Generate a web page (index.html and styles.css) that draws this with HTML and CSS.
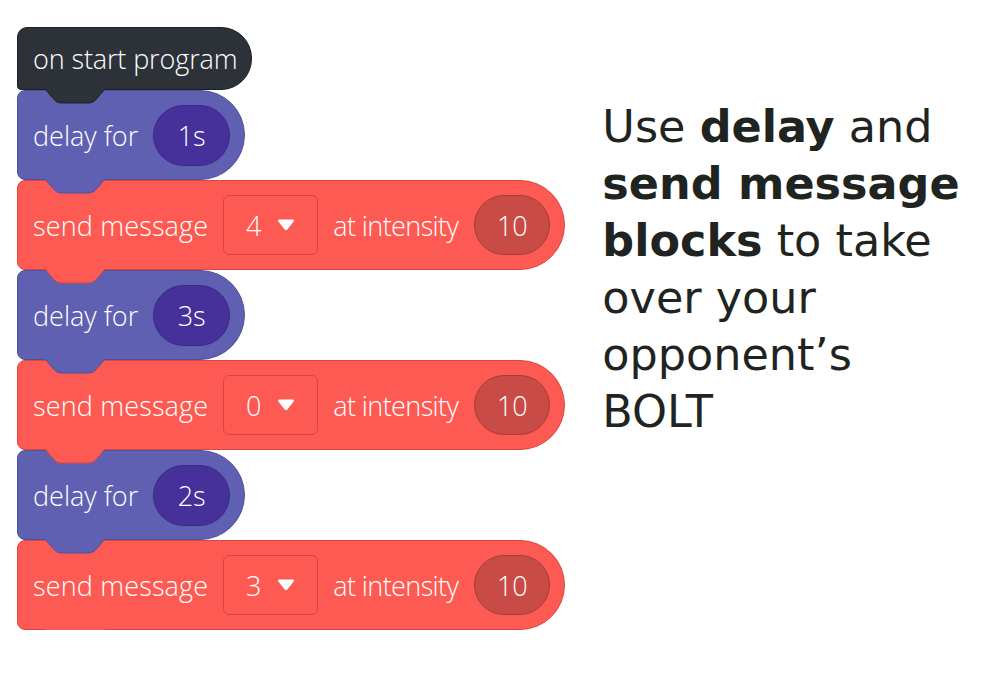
FILE: index.html
```html
<!DOCTYPE html>
<html lang="en">
<head>
<meta charset="utf-8">
<title>Blocks</title>
<link rel="stylesheet" href="styles.css">
</head>
<body>
<div class="page">
  <div class="stack">
    <div class="block hat">
      <span class="label">on start program</span>
      <svg class="tab" width="62" height="15" viewBox="0 0 62 15"><path d="M1,0 L10,10.5 Q13,14 17,14 L45,14 Q49,14 52,10.5 L61,0"/></svg>
    </div>
    <div class="block delay">
      <span class="label">delay for</span>
      <span class="pill pill-purple">1s</span>
      <svg class="tab" width="62" height="15" viewBox="0 0 62 15"><path d="M1,0 L10,10.5 Q13,14 17,14 L45,14 Q49,14 52,10.5 L61,0"/></svg>
    </div>
    <div class="block send">
      <span class="label label-wide">send message</span>
      <span class="dropdown"><span>4</span><svg class="caret" width="18" height="12" viewBox="0 0 18 12"><path d="M2.5,0.5 H15.5 Q18,0.5 16.6,2.6 L10.6,10.2 Q9,12 7.4,10.2 L1.4,2.6 Q0,0.5 2.5,0.5 Z"/></svg></span>
      <span class="label label-tight">at intensity</span>
      <span class="pill pill-red">10</span>
      <svg class="tab" width="62" height="15" viewBox="0 0 62 15"><path d="M1,0 L10,10.5 Q13,14 17,14 L45,14 Q49,14 52,10.5 L61,0"/></svg>
    </div>
    <div class="block delay">
      <span class="label">delay for</span>
      <span class="pill pill-purple">3s</span>
      <svg class="tab" width="62" height="15" viewBox="0 0 62 15"><path d="M1,0 L10,10.5 Q13,14 17,14 L45,14 Q49,14 52,10.5 L61,0"/></svg>
    </div>
    <div class="block send">
      <span class="label label-wide">send message</span>
      <span class="dropdown"><span>0</span><svg class="caret" width="18" height="12" viewBox="0 0 18 12"><path d="M2.5,0.5 H15.5 Q18,0.5 16.6,2.6 L10.6,10.2 Q9,12 7.4,10.2 L1.4,2.6 Q0,0.5 2.5,0.5 Z"/></svg></span>
      <span class="label label-tight">at intensity</span>
      <span class="pill pill-red">10</span>
      <svg class="tab" width="62" height="15" viewBox="0 0 62 15"><path d="M1,0 L10,10.5 Q13,14 17,14 L45,14 Q49,14 52,10.5 L61,0"/></svg>
    </div>
    <div class="block delay">
      <span class="label">delay for</span>
      <span class="pill pill-purple">2s</span>
      <svg class="tab" width="62" height="15" viewBox="0 0 62 15"><path d="M1,0 L10,10.5 Q13,14 17,14 L45,14 Q49,14 52,10.5 L61,0"/></svg>
    </div>
    <div class="block send">
      <span class="label label-wide">send message</span>
      <span class="dropdown"><span>3</span><svg class="caret" width="18" height="12" viewBox="0 0 18 12"><path d="M2.5,0.5 H15.5 Q18,0.5 16.6,2.6 L10.6,10.2 Q9,12 7.4,10.2 L1.4,2.6 Q0,0.5 2.5,0.5 Z"/></svg></span>
      <span class="label label-tight">at intensity</span>
      <span class="pill pill-red">10</span>
      <svg class="tab" width="62" height="15" viewBox="0 0 62 15"><path d="M1,0 L10,10.5 Q13,14 17,14 L45,14 Q49,14 52,10.5 L61,0"/></svg>
    </div>
  </div>
  <p class="caption">Use <b>delay</b> and<br><b>send message</b><br><b>blocks</b> to take<br>over your<br>opponent’s<br>BOLT</p>
</div>
</body>
</html>
```

FILE: styles.css
```css
html, body {
  margin: 0;
  padding: 0;
  background: #ffffff;
}

.page {
  display: flex;
  align-items: flex-start;
  gap: 37px;
  padding: 27px 0 0 17px;
}

.stack {
  display: flex;
  flex-direction: column;
  align-items: flex-start;
}

.block {
  position: relative;
  display: flex;
  align-items: center;
  gap: 15px;
  height: 90px;
  box-sizing: border-box;
  padding: 0 14px 0 15px;
  border: 1px solid;
  border-radius: 8px 45px 45px 8px;
  font-family: "Open Sans", sans-serif;
  font-weight: 350;
  font-size: 27px;
  color: #ffffff;
  white-space: nowrap;
}

.label {
  letter-spacing: 0;
}

.label-wide {
  letter-spacing: 0.15px;
}

.label-tight {
  letter-spacing: -0.6px;
}

.stack > .block:nth-child(1) { z-index: 7; }
.stack > .block:nth-child(2) { z-index: 6; }
.stack > .block:nth-child(3) { z-index: 5; }
.stack > .block:nth-child(4) { z-index: 4; }
.stack > .block:nth-child(5) { z-index: 3; }
.stack > .block:nth-child(6) { z-index: 2; }
.stack > .block:nth-child(7) { z-index: 1; }

.hat {
  height: 63px;
  padding-right: 14px;
  border-radius: 10px 31px 31px 4px;
  background: #2c3238;
  border-color: #1d2125;
}

.hat .label {
  letter-spacing: -0.12px;
}

.delay {
  background: #5f60b2;
  border-color: #4f509c;
}

.send {
  background: #fc5a52;
  border-color: #d9473f;
}

.send .label + .pill {
  margin-left: 1px;
}

.tab {
  position: absolute;
  left: 26px;
  top: 100%;
  display: block;
}

.tab path {
  stroke-width: 1;
}

.hat .tab path { fill: #2c3238; stroke: #1d2125; }
.delay .tab path { fill: #5f60b2; stroke: #4f509c; }
.send .tab path { fill: #fc5a52; stroke: #d9473f; }

.pill {
  display: flex;
  align-items: center;
  justify-content: center;
  width: 77px;
  height: 61px;
  box-sizing: border-box;
  border: 1px solid;
  border-radius: 31px;
}

.pill-purple {
  background: #46319b;
  border-color: #3a2987;
}

.pill-red {
  width: 76px;
  height: 60px;
  background: #c84b45;
  border-color: #a83d38;
}

.dropdown {
  display: flex;
  align-items: center;
  justify-content: center;
  gap: 16px;
  width: 95px;
  height: 60px;
  box-sizing: border-box;
  border: 1px solid #d6463f;
  border-radius: 6px;
}

.caret {
  display: block;
}

.caret path {
  fill: #ffffff;
}

.caption {
  margin: 71px 0 0 0;
  font-family: "DejaVu Sans", sans-serif;
  font-size: 44.5px;
  line-height: 57px;
  color: #1f2421;
  white-space: nowrap;
}

.caption b {
  font-weight: 700;
}
```
